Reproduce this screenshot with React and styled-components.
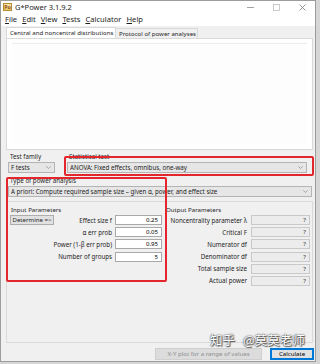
import React from 'react';
import styled, { createGlobalStyle } from 'styled-components';

const Global = createGlobalStyle`
  html, body { margin: 0; padding: 0; background: #d6d6d6; }
  body { font-family: "Noto Sans", "Open Sans", sans-serif; color: #1e1e1e; }
  * { box-sizing: border-box; }
`;

const Window = styled.div`
  position: relative;
  width: 316px;
  height: 362px;
  background: #f0f0f0;
  border: 1px solid #9c9c9c;
  display: flex;
  flex-direction: column;
  overflow: hidden;
`;

const TitleBar = styled.div`
  height: 12px;
  background: #fff;
  display: flex;
  align-items: center;
  padding-left: 2px;
`;

const AppIcon = styled.span`
  width: 9px;
  height: 8px;
  margin-right: 3px;
  background: linear-gradient(#fbe9b0, #e9c66a);
  border: 1px solid #b98a2e;
  font-size: 5px;
  line-height: 6px;
  font-weight: 700;
  color: #8a4a10;
  text-align: center;
  overflow: hidden;
`;

const Title = styled.span`
  font-size: 7.5px;
  line-height: 12px;
`;

const Controls = styled.div`
  margin-left: auto;
  display: flex;
  height: 100%;
`;

const Ctrl = styled.span`
  width: 26px;
  display: flex;
  align-items: center;
  justify-content: center;
`;

const MenuBar = styled.div`
  height: 13px;
  background: #fff;
  display: flex;
  align-items: center;
  padding-left: 4px;
  gap: 5px;
  font-size: 7.6px;
`;

const MenuItem = styled.span`
  line-height: 13px;
  & u { text-decoration: underline; text-underline-offset: 1px; }
`;

const TabStrip = styled.div`
  height: 12px;
  display: flex;
  align-items: flex-end;
  padding-left: 5px;
  font-size: 6.1px;
`;

const Tab = styled.div`
  width: ${p => p.w}px;
  height: ${p => (p.active ? 11 : 10)}px;
  background: ${p => (p.active ? '#fff' : '#f0f0f0')};
  border: 1px solid #d9d9d9;
  border-bottom: none;
  margin-left: ${p => (p.active ? 0 : -1)}px;
  padding-left: 3px;
  line-height: 9px;
  white-space: nowrap;
`;

const TabPanel = styled.div`
  height: 112px;
  margin: 0 2px 0 5px;
  background: #fff;
  border: 1px solid #d9d9d9;
  padding: 4px 5px 5px 5px;
  display: flex;
`;

const Plot = styled.div`
  flex: 1;
  border-top: 1px solid #ececec;
  background: #fdfdfd;
`;

const TopForm = styled.div`
  display: grid;
  grid-template-columns: 47px 1fr;
  column-gap: 12px;
  padding: 3px 8px 0 7px;
`;

const Field = styled.div`
  display: flex;
  flex-direction: column;
  gap: 1px;
`;

const Label = styled.div`
  font-size: 6.2px;
  line-height: 8px;
  height: 8px;
  padding-left: ${p => p.pad || 2}px;
  white-space: nowrap;
`;

const Select = styled.div`
  height: 11px;
  background: #e6e6e6;
  border: 1px solid #b4b4b4;
  display: flex;
  align-items: center;
  padding: 0 3px 0 2px;
  font-size: 6.2px;
  white-space: nowrap;
  & > span { flex: 1; overflow: hidden; }
`;

const TypeField = styled(Field)`
  padding: 4px 3px 0 7px;
`;

const Chevron = () => (
  <svg width="5" height="3" viewBox="0 0 5 3" style={{ flex: 'none' }}>
    <path d="M0.3 0.3 L2.5 2.5 L4.7 0.3" fill="none" stroke="#8a8a8a" strokeWidth="0.7" />
  </svg>
);

const ParamsPanel = styled.div`
  margin: 4px 2px 0 5px;
  height: 142px;
  border: 1px solid #dadada;
  display: grid;
  grid-template-columns: 155px 1fr;
  column-gap: 2px;
  padding-top: 1px;
`;

const Group = styled.div`
  display: flex;
  flex-direction: column;
  padding: ${p => p.pad};
`;

const GroupTitle = styled.div`
  font-size: 6.1px;
  line-height: 8px;
  height: 9px;
  padding-left: ${p => p.indent}px;
`;

const Rows = styled.div`
  display: flex;
  flex-direction: column;
  gap: 2.2px;
`;

const Row = styled.div`
  height: 10px;
  display: flex;
  align-items: center;
  justify-content: flex-end;
  gap: ${p => p.gap}px;
  font-size: 6.2px;
  white-space: nowrap;
`;

const DetermineButton = styled.div`
  margin-right: auto;
  width: 44px;
  height: 10px;
  background: #e1e1e1;
  border: 1px solid #adadad;
  font-size: 6.1px;
  line-height: 8px;
  text-align: center;
`;

const ValueBox = styled.div`
  width: ${p => p.w}px;
  height: 10px;
  background: ${p => (p.readOnly ? '#ececec' : '#fff')};
  border: 1px solid ${p => (p.readOnly ? '#c9c9c9' : '#a9a9a9')};
  text-align: right;
  padding-right: 3px;
  font-size: 6.1px;
  line-height: 8px;
  color: ${p => (p.readOnly ? '#333' : '#000')};
`;

const BottomBar = styled.div`
  margin-top: 5px;
  height: 12px;
  display: flex;
  justify-content: flex-end;
  padding-right: 1px;
  gap: 8px;
`;

const Button = styled.div`
  width: ${p => p.w}px;
  height: 12px;
  font-size: 6.1px;
  line-height: 10px;
  text-align: center;
  background: ${p => (p.disabled ? '#dcdcdc' : '#e1e1e1')};
  color: ${p => (p.disabled ? '#8f8f8f' : '#000')};
  border: 1px solid ${p => (p.primary ? '#0078d7' : '#cfcfcf')};
  box-shadow: ${p => (p.primary ? 'inset 0 0 0 1px #0078d7' : 'none')};
`;

const Highlight = styled.div`
  position: absolute;
  left: ${p => p.x}px;
  top: ${p => p.y}px;
  width: ${p => p.w}px;
  height: ${p => p.h}px;
  border: 2px solid #e3262b;
  border-radius: 2px;
  pointer-events: none;
`;

const Watermark = styled.div`
  position: absolute;
  left: 209px;
  top: 332px;
  font-family: "Noto Sans CJK SC", sans-serif;
  font-size: 12.5px;
  line-height: 14px;
  color: #fff;
  white-space: nowrap;
  text-shadow: 0 0 1px #444, 0 0 2px #555, 1px 1px 1px #555;
  & span { margin-left: 8px; }
`;

const inputs = [
  ['Effect size f', '0.25'],
  ['α err prob', '0.05'],
  ['Power (1-β err prob)', '0.95'],
  ['Number of groups', '5'],
];

const outputs = [
  'Noncentrality parameter λ',
  'Critical F',
  'Numerator df',
  'Denominator df',
  'Total sample size',
  'Actual power',
];

export default function App() {
  return (
    <>
      <Global />
      <Window>
        <TitleBar>
          <AppIcon>Pu</AppIcon>
          <Title>G*Power 3.1.9.2</Title>
          <Controls>
            <Ctrl>
              <svg width="7" height="7" viewBox="0 0 7 7"><path d="M0 3.5 H7" stroke="#8c8c8c" strokeWidth="0.8" /></svg>
            </Ctrl>
            <Ctrl>
              <svg width="7" height="7" viewBox="0 0 7 7"><rect x="0.5" y="0.5" width="6" height="6" fill="none" stroke="#bdbdbd" strokeWidth="0.8" /></svg>
            </Ctrl>
            <Ctrl>
              <svg width="7" height="7" viewBox="0 0 7 7"><path d="M0.5 0.5 L6.5 6.5 M6.5 0.5 L0.5 6.5" stroke="#7a7a7a" strokeWidth="0.8" /></svg>
            </Ctrl>
          </Controls>
        </TitleBar>
        <MenuBar>
          <MenuItem><u>F</u>ile</MenuItem>
          <MenuItem><u>E</u>dit</MenuItem>
          <MenuItem><u>V</u>iew</MenuItem>
          <MenuItem><u>T</u>ests</MenuItem>
          <MenuItem><u>C</u>alculator</MenuItem>
          <MenuItem><u>H</u>elp</MenuItem>
        </MenuBar>
        <TabStrip>
          <Tab active w={110}>Central and noncentral distributions</Tab>
          <Tab w={83}>Protocol of power analyses</Tab>
        </TabStrip>
        <TabPanel>
          <Plot />
        </TabPanel>
        <TopForm>
          <Field>
            <Label>Test family</Label>
            <Select><span>F tests</span><Chevron /></Select>
          </Field>
          <Field>
            <Label>Statistical test</Label>
            <Select><span>ANOVA: Fixed effects, omnibus, one-way</span><Chevron /></Select>
          </Field>
        </TopForm>
        <TypeField>
          <Label>Type of power analysis</Label>
          <Select><span>A priori: Compute required sample size – given α, power, and effect size</span><Chevron /></Select>
        </TypeField>
        <ParamsPanel>
          <Group pad="3px 0 0 3px">
            <GroupTitle indent={1}>Input Parameters</GroupTitle>
            <Rows>
              <Row gap={3}>
                <DetermineButton>Determine =&gt;</DetermineButton>
                <span>{inputs[0][0]}</span>
                <ValueBox w={47}>{inputs[0][1]}</ValueBox>
              </Row>
              {inputs.slice(1).map(([l, v]) => (
                <Row key={l} gap={3}>
                  <span>{l}</span>
                  <ValueBox w={47}>{v}</ValueBox>
                </Row>
              ))}
            </Rows>
          </Group>
          <Group pad="3px 2px 0 0">
            <GroupTitle indent={2}>Output Parameters</GroupTitle>
            <Rows>
              {outputs.map(l => (
                <Row key={l} gap={4}>
                  <span>{l}</span>
                  <ValueBox readOnly w={59}>?</ValueBox>
                </Row>
              ))}
            </Rows>
          </Group>
        </ParamsPanel>
        <BottomBar>
          <Button disabled w={107}>X-Y plot for a range of values</Button>
          <Button primary w={44}>Calculate</Button>
        </BottomBar>
        <Highlight x={63} y={155} w={250} h={20} />
        <Highlight x={5} y={176} w={161} h={105} />
        <Watermark>知乎<span>@莫莫老师</span></Watermark>
      </Window>
    </>
  );
}
